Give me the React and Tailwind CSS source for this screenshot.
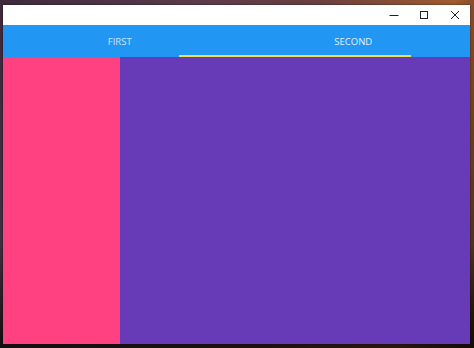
import React, { useState } from 'react';

const TitleBar = () => (
  <div className="flex h-[20px] items-center justify-end bg-white">
    {/* minimize */}
    <div className="flex h-full w-[30px] items-center justify-center">
      <svg width="10" height="10" viewBox="0 0 10 10">
        <path d="M0.5 5.5h9" stroke="#222" strokeWidth="1" />
      </svg>
    </div>
    {/* maximize */}
    <div className="flex h-full w-[30px] items-center justify-center">
      <svg width="10" height="10" viewBox="0 0 10 10">
        <rect x="1.5" y="1.5" width="7" height="7" fill="none" stroke="#222" strokeWidth="1" />
      </svg>
    </div>
    {/* close */}
    <div className="flex h-full w-[31px] items-center justify-center">
      <svg width="10" height="10" viewBox="0 0 10 10">
        <path d="M1 1l8 8M9 1l-8 8" stroke="#222" strokeWidth="1" />
      </svg>
    </div>
  </div>
);

const Tabs = ({ activeTab, setActiveTab }) => (
  <div className="relative flex h-[32px] bg-[#2196f3]">
    <button
      className="flex-1 pt-[3px] text-[9.5px] text-[#cfe6fb]"
      onClick={() => setActiveTab('first')}
    >
      FIRST
    </button>
    <button
      className="flex-1 pt-[3px] text-[9.5px] text-[#e3f1fd]"
      onClick={() => setActiveTab('second')}
    >
      SECOND
    </button>
    {/* indicator, caught mid-slide */}
    <div className="absolute bottom-0 left-[176px] h-[2px] w-[232px] bg-[#e8e25a]" />
  </div>
);

export default function App() {
  const [activeTab, setActiveTab] = useState('second');

  return (
    <div
      className="flex h-[348px] w-[474px] flex-col overflow-hidden pl-[3px] pr-[4px] pt-[5px] pb-[4px] bg-[linear-gradient(180deg,rgba(0,0,0,0)_70%,rgba(10,6,4,0.8)_100%),linear-gradient(100deg,#3e2a3c_0%,#5a3a4a_35%,#6a4040_60%,#a05a30_85%,#3a2418_100%)]"
      style={{ fontFamily: '"Open Sans", "Noto Sans", sans-serif' }}
    >
      <div className="flex flex-1 flex-col shadow-[0_0_2px_rgba(0,0,0,0.6)]">
        <TitleBar />
        <Tabs activeTab={activeTab} setActiveTab={setActiveTab} />

        {/* content */}
        <div className="flex flex-1">
          <div className="w-[117px] bg-[#ff4081]" />
          <div className="flex-1 bg-[#673ab7]" />
        </div>
      </div>
    </div>
  );
}
